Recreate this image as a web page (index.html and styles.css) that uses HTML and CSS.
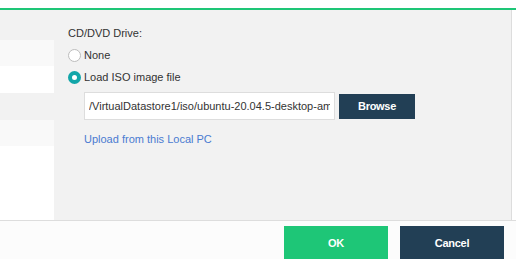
FILE: index.html
```html
<!DOCTYPE html>
<html lang="en">
<head>
    <meta charset="UTF-8">
    <title>CD/DVD Drive</title>
    <link rel="stylesheet" href="styles.css">
</head>
<body>

    <div class="dialog">
        <div class="dialog-main">
            <div class="side-list">
                <div class="side-row row-head"></div>
                <div class="side-row row-alt"></div>
                <div class="side-row row-plain"></div>
                <div class="side-row row-hover"></div>
                <div class="side-row row-alt"></div>
            </div>

            <div class="settings">
                <div class="field-label">CD/DVD Drive:</div>

                <label class="radio-row">
                    <span class="radio"></span>
                    <span>None</span>
                </label>
                <label class="radio-row">
                    <span class="radio checked"></span>
                    <span>Load ISO image file</span>
                </label>

                <div class="iso-row">
                    <input type="text" class="iso-path" value="/VirtualDatastore1/iso/ubuntu-20.04.5-desktop-amd64.iso">
                    <button class="btn btn-dark btn-browse">Browse</button>
                </div>

                <a href="#" class="upload-link">Upload from this Local PC</a>
            </div>
        </div>

        <div class="dialog-footer">
            <button class="btn btn-green btn-footer">OK</button>
            <button class="btn btn-dark btn-footer">Cancel</button>
        </div>
    </div>

</body>
</html>
```

FILE: styles.css
```css
body {
    margin: 0;
    font-family: 'Liberation Sans', Arial, sans-serif;
    font-size: 11px;
    color: #333333;
    background-color: #ffffff;
}

.dialog {
    margin-top: 8px;
    border-top: 2px solid #1ec677; /* green top border */
}

.dialog-main {
    display: flex;
    height: 210px;
    padding-right: 4px;
}

/* list on the left, mostly hidden behind the panel */
.side-list {
    width: 54px;
    display: flex;
    flex-direction: column;
}

.side-row {
    height: 26px;
}

.row-head {
    height: 30px;
    background-color: #f2f2f2;
}

.row-alt {
    background-color: #f9f9f9;
}

.row-plain {
    height: 27px;
    background-color: #ffffff;
}

.row-hover {
    height: 27px;
    background-color: #f2f2f2;
}

.settings {
    flex: 1;
    background-color: #f2f2f2;
    border-right: 1px solid #dddddd;
    padding: 16px 14px 0;
    line-height: 14px;
}

.field-label {
    margin-bottom: 4px;
}

.radio-row {
    display: flex;
    align-items: center;
    gap: 3px;
    height: 22px;
}

.radio {
    box-sizing: border-box;
    width: 13px;
    height: 13px;
    border-radius: 50%;
    border: 1px solid #bdbdbd;
    background-color: #ffffff;
}

.radio.checked {
    border: 4px solid #13a6a9; /* teal selected ring */
    background-color: #ffffff;
}

.iso-row {
    display: flex;
    align-items: center;
    margin: 4px 0 0 16px;
}

.iso-path {
    box-sizing: border-box;
    width: 251px;
    height: 28px;
    padding: 0 4px;
    border: 1px solid #dddddd;
    background-color: #ffffff;
    font-family: inherit;
    font-size: 11px;
    color: #333333;
    outline: none;
}

.btn {
    border: none;
    color: #ffffff;
    font-family: 'Liberation Sans', Arial, sans-serif;
    font-size: 11px;
    font-weight: bold;
    letter-spacing: -0.3px; /* tighter, like the original button font */
    cursor: pointer;
    padding: 0;
}

.btn-dark {
    background-color: #223f55;
}

.btn-green {
    background-color: #1ec677;
}

.btn-browse {
    width: 76px;
    height: 25px;
    margin-left: 4px;
}

.upload-link {
    display: inline-block;
    margin: 12px 0 0 16px;
    color: #4a7bd1;
    text-decoration: none;
}

.dialog-footer {
    display: flex;
    justify-content: flex-end;
    gap: 12px;
    height: 39px;
    padding: 5px 12px 0 0;
    box-sizing: border-box;
    border-top: 1px solid #dddddd;
    background-color: #fcfcfc;
}

.btn-footer {
    width: 104px;
    height: 34px;
}
```
